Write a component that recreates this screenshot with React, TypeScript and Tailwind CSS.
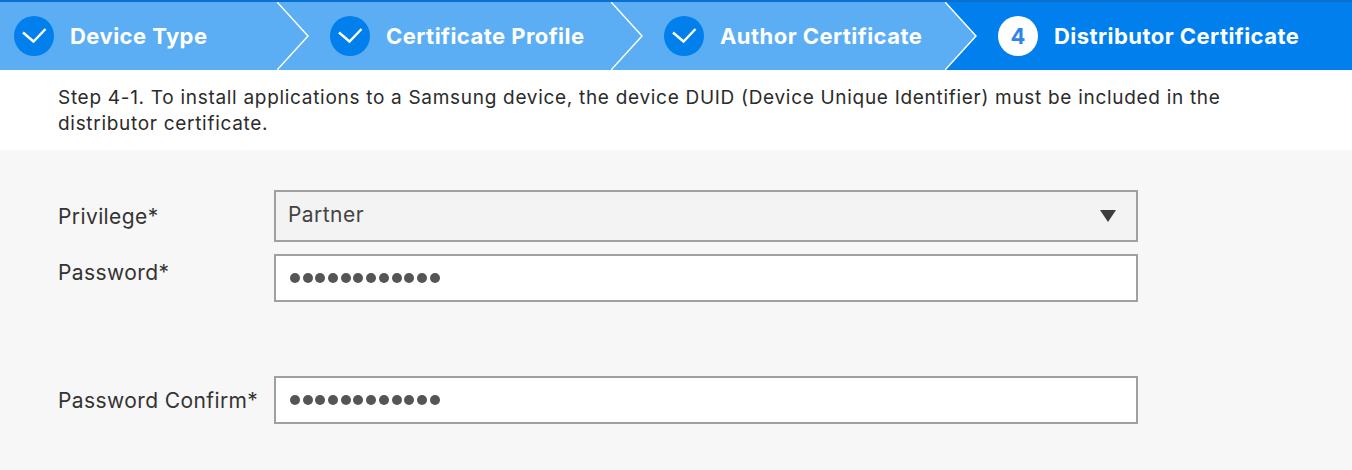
const font = { fontFamily: "Inter, 'Liberation Sans', sans-serif" };

function Check() {
  return (
    <span className="flex h-10 w-10 shrink-0 items-center justify-center rounded-full bg-[#007fed]">
      <svg width="40" height="40" viewBox="0 0 40 40" fill="none" stroke="#ffffff" strokeWidth="2.4">
        <path d="M9 16.5 L19.5 25.5 L31.5 13" />
      </svg>
    </span>
  );
}

function Step({ label, width, active, n }: { label: string; width: string; active?: boolean; n?: number }) {
  return (
    <div className={`relative flex h-full items-center ${width} ${active ? "flex-1 bg-[#007fed] pl-[53px]" : "bg-[#5baef4] pl-[14px]"}`}>
      {active ? (
        <span className="flex h-10 w-10 shrink-0 items-center justify-center rounded-full bg-white text-[22px] font-bold text-[#2f86e6]">
          {n}
        </span>
      ) : (
        <Check />
      )}
      <span className="ml-4 whitespace-nowrap text-[22px] font-bold leading-none tracking-[0.45px] text-white">{label}</span>
      {!active && (
        <svg className="absolute right-[-32px] top-0 z-10" width="32" height="68" viewBox="0 0 32 68">
          <path d="M0 0 L31 34 L0 68 Z" fill="#5baef4" />
          <path d="M0 0 L31 34 L0 68" fill="none" stroke="#ffffff" strokeWidth="1.5" />
        </svg>
      )}
    </div>
  );
}

function Row({ label, children, className, labelClass }: { label: string; children: React.ReactNode; className: string; labelClass?: string }) {
  return (
    <div className={`flex ${className}`}>
      <div className={`w-[274px] shrink-0 whitespace-nowrap pl-[58px] text-[21px] leading-none tracking-[0.4px] text-[#333333] ${labelClass ?? ""}`}>{label}</div>
      {children}
    </div>
  );
}

function Pw() {
  return (
    <div className="flex h-[48px] w-[864px] items-center border-2 border-[#a0a0a0] bg-white pl-[14px]">
      <span className="flex gap-[2.7px]">
        {Array.from({ length: 12 }).map((_, i) => (
          <span key={i} className="h-[10px] w-[10px] rounded-full bg-[#555555]" />
        ))}
      </span>
    </div>
  );
}

export default function App() {
  return (
    <div className="h-[470px] w-[1352px] overflow-hidden bg-white" style={font}>
      <div className="h-[2px] bg-[#0a6fd0]" />
      <div className="flex h-[68px]">
        <Step label="Device Type" width="w-[277px]" />
        <div className="w-[39px] bg-[#5baef4]" />
        <Step label="Certificate Profile" width="w-[295px]" />
        <div className="w-[39px] bg-[#5baef4]" />
        <Step label="Author Certificate" width="w-[295px]" />
        <Step label="Distributor Certificate" width="" active n={4} />
      </div>
      <div className="h-[80px] pl-[58px] pr-[100px] pt-[15px] text-[19px] leading-[26px] tracking-[0.7px] text-[#2b2b2b]">
        Step 4-1. To install applications to a Samsung device, the device DUID (Device Unique Identifier) must be included in the distributor certificate.
      </div>
      <div className="h-[320px] bg-[#f7f7f7] pt-[40px]">
        <Row label="Privilege*" className="h-[52px] items-center">
          <div className="flex h-[52px] w-[864px] items-center justify-between border-2 border-[#a0a0a0] bg-[#f3f3f3] pl-[12px] pr-[20px] pb-[3px] text-[21px] tracking-[0.45px] text-[#444444]">
            Partner
            <svg className="mt-[3px]" width="16" height="12" viewBox="0 0 16 12"><path d="M0 0 H16 L8 12 Z" fill="#3c3c3c" /></svg>
          </div>
        </Row>
        <Row label="Password*" className="mt-[12px] h-[48px] items-start" labelClass="pt-[8px]">
          <Pw />
        </Row>
        <Row label="Password Confirm*" className="mt-[74px] h-[48px] items-center">
          <Pw />
        </Row>
      </div>
    </div>
  );
}
